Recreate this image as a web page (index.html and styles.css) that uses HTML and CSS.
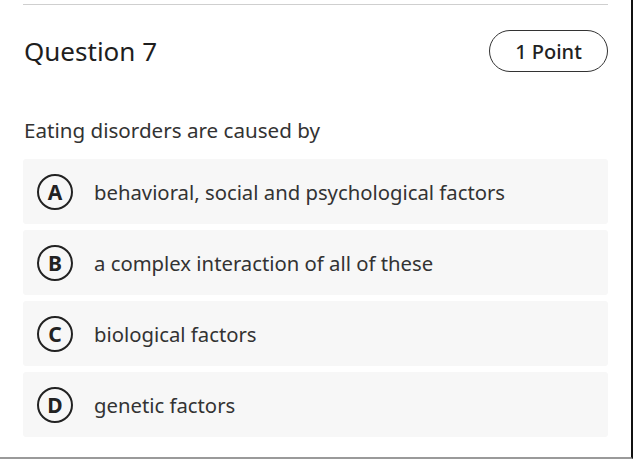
FILE: index.html
```html
<!DOCTYPE html>
<html lang="en">
<head>
<meta charset="utf-8">
<title>Question 7</title>
<link rel="stylesheet" href="styles.css">
</head>
<body>
<div class="page">
  <div class="rule"></div>
  <div class="header">
    <h2 class="title">Question 7</h2>
    <span class="badge">1 Point</span>
  </div>
  <p class="prompt">Eating disorders are caused by</p>
  <ul class="options">
    <li class="option"><span class="letter">A</span><span class="label">behavioral, social and psychological factors</span></li>
    <li class="option"><span class="letter">B</span><span class="label">a complex interaction of all of these</span></li>
    <li class="option"><span class="letter">C</span><span class="label">biological factors</span></li>
    <li class="option"><span class="letter">D</span><span class="label">genetic factors</span></li>
  </ul>
</div>
</body>
</html>
```
FILE: styles.css
```css
html, body {
  margin: 0;
  padding: 0;
  background: #fff;
}
body {
  font-family: "Noto Sans", "Open Sans", sans-serif;
  color: #2b2b2b;
}
.page {
  box-sizing: border-box;
  width: 633px;
  height: 459px;
  padding: 4px 23px 0 23px;
  border-right: 2px solid #111;
  border-bottom: 2px solid #9a9a9a;
}
.rule {
  height: 1px;
  background: #cfcfcf;
}
.header {
  display: flex;
  justify-content: space-between;
  align-items: center;
  margin-top: 25px;
  padding-left: 1px;
}
.title {
  margin: 0;
  font-size: 26px;
  font-weight: 400;
  color: #1e1e1e;
  line-height: 30px;
}
.badge {
  box-sizing: border-box;
  height: 42px;
  width: 119px;
  display: flex;
  align-items: center;
  justify-content: center;
  border: 1.5px solid #333;
  border-radius: 21px;
  font-size: 20px;
  font-weight: 500;
  color: #222;
}
.prompt {
  margin: 46px 0 0 1px;
  font-size: 20.6px;
  line-height: 24px;
  color: #333;
}
.options {
  list-style: none;
  margin: 17px 0 0 0;
  padding: 0;
  display: flex;
  flex-direction: column;
  gap: 6px;
}
.option {
  height: 65px;
  display: flex;
  align-items: center;
  gap: 21px;
  padding-left: 14px;
  background: #f7f7f7;
  border-radius: 3px;
}
.letter {
  box-sizing: border-box;
  width: 36px;
  height: 36px;
  border: 2.5px solid #222;
  border-radius: 50%;
  display: flex;
  align-items: center;
  justify-content: center;
  font-size: 21px;
  font-weight: 700;
  color: #222;
}
.label {
  font-size: 20.3px;
  color: #333;
}
```
